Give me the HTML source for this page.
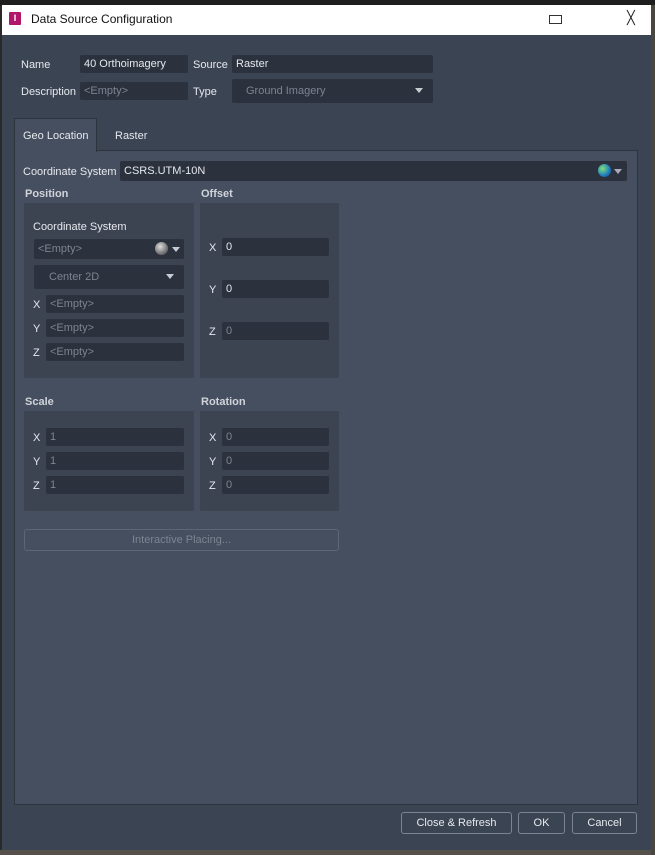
<!DOCTYPE html><html><head><style>
*{box-sizing:border-box;margin:0;padding:0}
body{width:655px;height:855px;background:#2a2a2a;font-family:"Liberation Sans",sans-serif;font-size:11px;color:#e6e9ee;position:relative;overflow:hidden}
.a{position:absolute}
.in{position:absolute;background:#2c323d;border-radius:2px;padding-left:4px;line-height:18px;height:18px;white-space:nowrap}
.dim{color:#7c8491}
.grp{position:absolute;background:#3c4452;border-radius:2px}
.b{font-weight:bold;color:#d0d4da}
.btn{position:absolute;border:1px solid #7a8494;border-radius:3px;text-align:center;line-height:20px;height:22px;color:#e6e9ee}
.tri{position:absolute;width:0;height:0;border-left:4px solid transparent;border-right:4px solid transparent;border-top:5px solid #c8ccd2}
</style></head><body>
<div class="a" style="left:0;top:0;width:655px;height:6px;background:#1e1e1e"></div>
<div class="a" style="left:2px;top:5px;width:649px;height:845px;background:#3b4452"></div>
<div class="a" style="left:2px;top:5px;width:649px;height:30px;background:#fff"></div>
<div class="a" style="left:9px;top:12px;width:12px;height:13px;background:#b0176b;border-radius:1px;color:#fff;font-size:9px;text-align:center;line-height:13px;font-weight:bold">I</div>
<div class="a" style="left:31px;top:12px;color:#111;font-size:12px">Data Source Configuration</div>
<div class="a" style="left:549px;top:15px;width:13px;height:9px;border:1px solid #333"></div>
<div class="a" style="left:627px;top:10px;color:#222;font-size:13px;font-weight:lighter">╳</div>

<div class="a" style="left:21px;top:59px">Name</div>
<div class="in" style="left:80px;top:55px;width:108px">40 Orthoimagery</div>
<div class="a" style="left:193px;top:59px">Source</div>
<div class="in" style="left:232px;top:55px;width:201px">Raster</div>
<div class="a" style="left:21px;top:86px">Description</div>
<div class="in dim" style="left:80px;top:82px;width:108px">&lt;Empty&gt;</div>
<div class="a" style="left:193px;top:86px">Type</div>
<div class="in dim" style="left:232px;top:79px;width:201px;height:24px;line-height:24px;padding-left:14px">Ground Imagery</div>
<div class="tri" style="left:415px;top:88px"></div>

<div class="a" style="left:14px;top:150px;width:624px;height:655px;background:#464f60;border:1px solid #2e343e"></div>
<div class="a" style="left:14px;top:118px;width:83px;height:34px;background:#464f60;border:1px solid #2e343e;border-bottom:none"></div>
<div class="a" style="left:23px;top:130px">Geo Location</div>
<div class="a" style="left:115px;top:130px">Raster</div>

<div class="a" style="left:23px;top:166px">Coordinate System</div>
<div class="in" style="left:120px;top:161px;width:507px;height:20px;line-height:20px">CSRS.UTM-10N</div>
<div class="a" style="left:598px;top:164px;width:13px;height:13px;border-radius:50%;background:radial-gradient(circle at 35% 35%,#7fe07a,#1f7ac0 60%,#103a70)"></div>
<div class="tri" style="left:614px;top:169px;border-top-color:#aab"></div>

<div class="a b" style="left:25px;top:188px">Position</div>
<div class="a b" style="left:201px;top:188px">Offset</div>
<div class="grp" style="left:24px;top:203px;width:170px;height:175px"></div>
<div class="grp" style="left:200px;top:203px;width:139px;height:175px"></div>
<div class="a" style="left:33px;top:221px">Coordinate System</div>
<div class="in dim" style="left:34px;top:239px;width:150px;height:20px;line-height:20px">&lt;Empty&gt;</div>
<div class="a" style="left:155px;top:242px;width:13px;height:13px;border-radius:50%;background:radial-gradient(circle at 40% 35%,#ddd,#777 60%,#444)"></div>
<div class="tri" style="left:172px;top:247px"></div>
<div class="in dim" style="left:34px;top:265px;width:150px;height:24px;line-height:24px;padding-left:15px">Center 2D</div>
<div class="tri" style="left:166px;top:274px"></div>
<div class="a" style="left:33px;top:299px">X</div><div class="in dim" style="left:46px;top:295px;width:138px">&lt;Empty&gt;</div>
<div class="a" style="left:33px;top:323px">Y</div><div class="in dim" style="left:46px;top:319px;width:138px">&lt;Empty&gt;</div>
<div class="a" style="left:33px;top:347px">Z</div><div class="in dim" style="left:46px;top:343px;width:138px">&lt;Empty&gt;</div>
<div class="a" style="left:209px;top:242px">X</div><div class="in" style="left:222px;top:238px;width:107px">0</div>
<div class="a" style="left:209px;top:284px">Y</div><div class="in" style="left:222px;top:280px;width:107px">0</div>
<div class="a" style="left:209px;top:326px">Z</div><div class="in dim" style="left:222px;top:322px;width:107px">0</div>

<div class="a b" style="left:25px;top:396px">Scale</div>
<div class="a b" style="left:201px;top:396px">Rotation</div>
<div class="grp" style="left:24px;top:411px;width:170px;height:100px"></div>
<div class="grp" style="left:200px;top:411px;width:139px;height:100px"></div>
<div class="a" style="left:33px;top:432px">X</div><div class="in dim" style="left:46px;top:428px;width:138px">1</div>
<div class="a" style="left:33px;top:456px">Y</div><div class="in dim" style="left:46px;top:452px;width:138px">1</div>
<div class="a" style="left:33px;top:480px">Z</div><div class="in dim" style="left:46px;top:476px;width:138px">1</div>
<div class="a" style="left:209px;top:432px">X</div><div class="in dim" style="left:222px;top:428px;width:107px">0</div>
<div class="a" style="left:209px;top:456px">Y</div><div class="in dim" style="left:222px;top:452px;width:107px">0</div>
<div class="a" style="left:209px;top:480px">Z</div><div class="in dim" style="left:222px;top:476px;width:107px">0</div>

<div class="btn" style="left:24px;top:529px;width:315px;border-color:#5d6675;color:#7c8491">Interactive Placing...</div>

<div class="btn" style="left:401px;top:812px;width:111px">Close &amp; Refresh</div>
<div class="btn" style="left:518px;top:812px;width:47px">OK</div>
<div class="btn" style="left:572px;top:812px;width:65px">Cancel</div>
<div class="a" style="left:0;top:850px;width:655px;height:5px;background:#555049"></div>
<div class="a" style="left:651px;top:5px;width:4px;height:850px;background:#4a4640"></div>
</body></html>
